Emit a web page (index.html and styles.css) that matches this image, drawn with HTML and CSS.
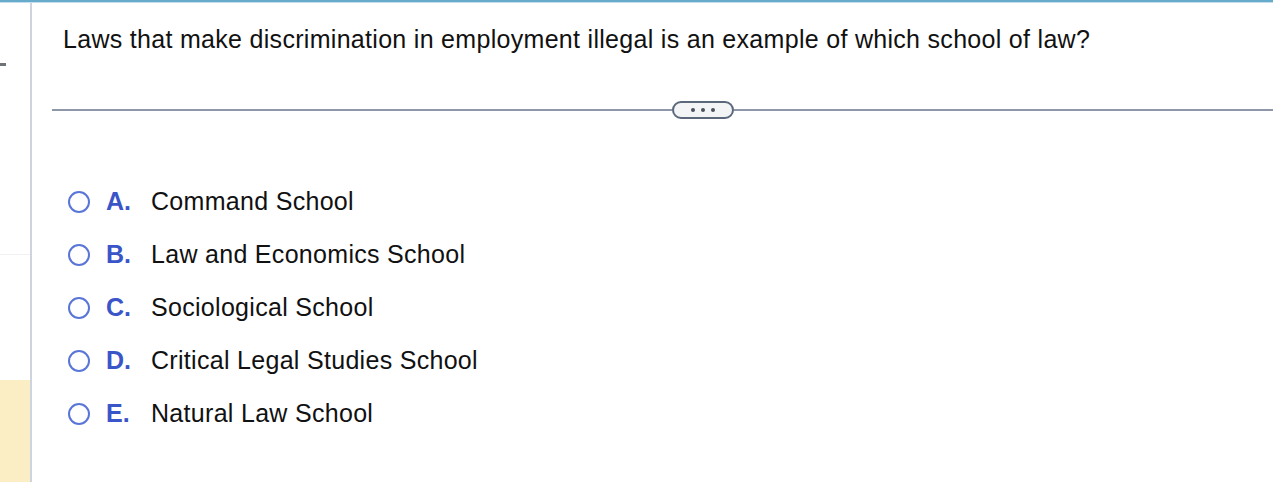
FILE: index.html
```html
<!DOCTYPE html>
<html>
<head>
<meta charset="utf-8">
<link rel="stylesheet" href="styles.css">
</head>
<body>
<div class="topbar"></div>
<div class="page">
  <aside class="sidebar">
    <div class="sb-top"><span class="dash"></span></div>
    <div class="sb-mid"></div>
    <div class="sb-yellow"></div>
  </aside>
  <main class="main">
    <p class="question">Laws that make discrimination in employment illegal is an example of which school of law?</p>
    <div class="divider">
      <span class="line left"></span>
      <button class="more"><span class="dot"></span><span class="dot"></span><span class="dot"></span></button>
      <span class="line right"></span>
    </div>
    <ul class="options">
      <li class="option"><span class="radio"></span><span class="letter">A.</span><span class="text">Command School</span></li>
      <li class="option"><span class="radio"></span><span class="letter">B.</span><span class="text">Law and Economics School</span></li>
      <li class="option"><span class="radio"></span><span class="letter">C.</span><span class="text">Sociological School</span></li>
      <li class="option"><span class="radio"></span><span class="letter">D.</span><span class="text">Critical Legal Studies School</span></li>
      <li class="option"><span class="radio"></span><span class="letter">E.</span><span class="text">Natural Law School</span></li>
    </ul>
  </main>
</div>
</body>
</html>
```
FILE: styles.css
```css
html, body {
  margin: 0;
  padding: 0;
  background: #ffffff;
  height: 100%;
  overflow: hidden;
}
body {
  font-family: "Liberation Sans", Arial, Helvetica, sans-serif;
  color: #111111;
  display: flex;
  flex-direction: column;
}
.topbar {
  height: 2px;
  background: #67abcc;
  border-bottom: 1px solid #c4dfeb;
  flex: 0 0 auto;
}
.page {
  flex: 1;
  display: flex;
}
.sidebar {
  width: 30px;
  flex: 0 0 30px;
  border-right: 2px solid #cdd3df;
  display: flex;
  flex-direction: column;
}
.sb-top {
  height: 251px;
  border-bottom: 1px solid #f1f1f3;
  position: relative;
}
.dash {
  position: absolute;
  left: 0;
  top: 60px;
  width: 6px;
  height: 3px;
  background: #6f7378;
}
.sb-mid {
  height: 125px;
}
.sb-yellow {
  flex: 1;
  background: #fbedc4;
}
.main {
  flex: 1;
  padding-top: 21px;
}
.question {
  margin: 0 0 0 31px;
  font-size: 25px;
  letter-spacing: 0.3px;
  line-height: 30px;
}
.divider {
  display: flex;
  align-items: center;
  margin-top: 47px;
  margin-left: 20px;
}
.line {
  height: 2px;
  background: #8e97a8;
}
.line.left {
  flex: 0 0 620px;
}
.line.right {
  flex: 1;
}
.more {
  width: 62px;
  height: 18px;
  box-sizing: border-box;
  border: 2px solid #5b687c;
  border-radius: 9px;
  background: #f3f4f6;
  padding: 0;
  display: flex;
  align-items: center;
  justify-content: center;
  gap: 6px;
}
.dot {
  width: 4px;
  height: 4px;
  border-radius: 50%;
  background: #4a515c;
}
.options {
  list-style: none;
  margin: 56px 0 0 0;
  padding: 0 0 0 36px;
}
.option {
  display: flex;
  align-items: center;
  height: 53px;
  font-size: 25px;
  letter-spacing: 0.3px;
}
.radio {
  width: 22px;
  height: 22px;
  box-sizing: border-box;
  border: 2px solid #5a75d8;
  border-radius: 50%;
  flex: 0 0 auto;
  margin-right: 16px;
}
.letter {
  color: #3a55c8;
  font-weight: bold;
  width: 45px;
  letter-spacing: 0;
}
.text {
  color: #111111;
}
```
